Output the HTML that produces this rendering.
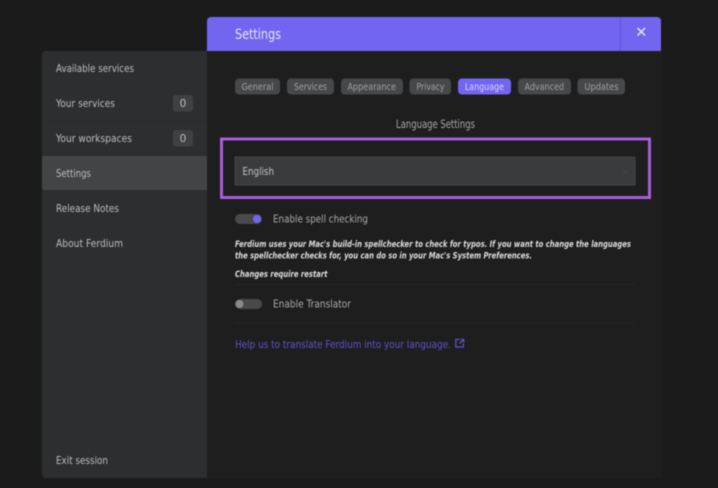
<!DOCTYPE html>
<html lang="en">
<head>
<meta charset="utf-8">
<title>Settings</title>
<style>
html,body{margin:0;padding:0;width:718px;height:488px;overflow:hidden;background:#1b1b1b}
svg{display:block;filter:blur(.45px)}
text{font-family:"DejaVu Sans",sans-serif;font-size:10.5px;fill:#bdbdbd}
.tab{font-size:9.5px;fill:#a0a0a0}
.note{font-size:8.5px;font-weight:bold;font-style:italic;fill:#dedede}
</style>
</head>
<body>
<svg xmlns="http://www.w3.org/2000/svg" width="718" height="488" viewBox="0 0 718 488">
  <rect width="718" height="488" fill="#1b1b1b"/>
  <!-- sidebar -->
  <path d="M46 51H207V478H46a4 4 0 0 1-4-4V55a4 4 0 0 1 4-4z" fill="#2d2e30"/>
  <g fill="#2a2b2d">
    <rect x="42" y="85" width="165" height="1"/><rect x="42" y="120" width="165" height="1"/>
    <rect x="42" y="155" width="165" height="1"/><rect x="42" y="225" width="165" height="1"/>
    <rect x="42" y="260" width="165" height="1"/>
  </g>
  <rect x="42" y="156" width="165" height="34" fill="#434446"/>
  <text x="56" y="72" textLength="78" lengthAdjust="spacingAndGlyphs">Available services</text>
  <text x="56" y="107" textLength="59" lengthAdjust="spacingAndGlyphs">Your services</text>
  <text x="56" y="142" textLength="76" lengthAdjust="spacingAndGlyphs">Your workspaces</text>
  <text x="56" y="177" textLength="35" lengthAdjust="spacingAndGlyphs">Settings</text>
  <text x="56" y="212" textLength="63" lengthAdjust="spacingAndGlyphs">Release Notes</text>
  <text x="56" y="247" textLength="67" lengthAdjust="spacingAndGlyphs">About Ferdium</text>
  <text x="56" y="464" textLength="52" lengthAdjust="spacingAndGlyphs">Exit session</text>
  <rect x="173" y="95" width="20" height="16.500" rx="3" fill="#404143"/>
  <rect x="173" y="130" width="20" height="16.500" rx="3" fill="#404143"/>
  <text x="183" y="107" text-anchor="middle">0</text>
  <text x="183" y="142" text-anchor="middle">0</text>

  <!-- panel -->
  <rect x="207" y="51" width="454" height="427" fill="#1e1e1e"/>
  <path d="M211 17H657a4 4 0 0 1 4 4V51H207V21a4 4 0 0 1 4-4z" fill="#7266f0"/>
  <rect x="619.500" y="17" width="1.500" height="34" fill="#6459e2"/>
  <text x="235" y="39" textLength="46" lengthAdjust="spacingAndGlyphs" style="font-size:14.500px;fill:#e6e3ff">Settings</text>
  <path d="M637.500 28L645 35.500M645 28L637.500 35.500" stroke="#f1efff" stroke-width="1.300" fill="none"/>

  <!-- tabs -->
  <g fill="#47484a">
    <rect x="235" y="78.500" width="45" height="16" rx="4"/>
    <rect x="287" y="78.500" width="47" height="16" rx="4"/>
    <rect x="341" y="78.500" width="62" height="16" rx="4"/>
    <rect x="409.500" y="78.500" width="41.500" height="16" rx="4"/>
    <rect x="458" y="78.500" width="53" height="16" rx="4" fill="#7266f0"/>
    <rect x="518" y="78.500" width="53" height="16" rx="4"/>
    <rect x="577.500" y="78.500" width="47.500" height="16" rx="4"/>
  </g>
  <text class="tab" x="241.500" y="90" textLength="32" lengthAdjust="spacingAndGlyphs">General</text>
  <text class="tab" x="294" y="90" textLength="33" lengthAdjust="spacingAndGlyphs">Services</text>
  <text class="tab" x="347.500" y="90" textLength="48.500" lengthAdjust="spacingAndGlyphs">Appearance</text>
  <text class="tab" x="416.500" y="90" textLength="28" lengthAdjust="spacingAndGlyphs">Privacy</text>
  <text class="tab" x="465" y="90" textLength="39" lengthAdjust="spacingAndGlyphs" style="fill:#d8d4ff">Language</text>
  <text class="tab" x="524.500" y="90" textLength="39.500" lengthAdjust="spacingAndGlyphs">Advanced</text>
  <text class="tab" x="584.500" y="90" textLength="34" lengthAdjust="spacingAndGlyphs">Updates</text>

  <text x="396" y="128" textLength="79" lengthAdjust="spacingAndGlyphs" style="font-size:11.500px;fill:#a8a8a8">Language Settings</text>

  <!-- select -->
  <rect x="235" y="157" width="400" height="28" fill="#3a3b3d" stroke="#444547" stroke-width="1"/>
  <text x="242.500" y="175" textLength="31.500" lengthAdjust="spacingAndGlyphs" style="fill:#c4c4c4">English</text>
  <path d="M623 170.500l2.500 2.500 2.500-2.500" stroke="#48494b" stroke-width="1" fill="none"/>

  <!-- highlight -->
  <rect x="221.500" y="139" width="428" height="58.500" fill="none" stroke="#ae5ce4" stroke-width="2.900"/>

  <!-- spell toggle -->
  <rect x="235" y="214" width="27" height="10" rx="5" fill="#4a4a4c"/>
  <circle cx="257" cy="219" r="4" fill="#7266f0"/>
  <text x="273" y="222.500" textLength="95" lengthAdjust="spacingAndGlyphs" style="fill:#ababab">Enable spell checking</text>

  <text class="note" x="235" y="247" textLength="396" lengthAdjust="spacingAndGlyphs">Ferdium uses your Mac's build-in spellchecker to check for typos. If you want to change the languages</text>
  <text class="note" x="235" y="258.500" textLength="297" lengthAdjust="spacingAndGlyphs">the spellchecker checks for, you can do so in your Mac's System Preferences.</text>
  <text class="note" x="235" y="277" textLength="92.500" lengthAdjust="spacingAndGlyphs">Changes require restart</text>

  <line x1="235" y1="284.500" x2="635" y2="284.500" stroke="#2e2e2e" stroke-width="1" stroke-dasharray="1 1"/>

  <!-- translator toggle -->
  <rect x="235" y="299" width="27" height="10" rx="5" fill="#4a4a4c"/>
  <circle cx="239.500" cy="304" r="4" fill="#8a8a8a"/>
  <text x="273" y="307.500" textLength="78" lengthAdjust="spacingAndGlyphs" style="fill:#ababab">Enable Translator</text>

  <line x1="235" y1="323" x2="635" y2="323" stroke="#2e2e2e" stroke-width="1" stroke-dasharray="1 1"/>

  <!-- link -->
  <text x="235" y="348" textLength="216" lengthAdjust="spacingAndGlyphs" style="fill:#5f53cc">Help us to translate Ferdium into your language.</text>
  <path d="M459.500 339.500H455.800V347H463.300V343.500M459.500 343.500L463.500 339.800M460.800 339.500H463.800V342.500" stroke="#5f53cc" stroke-width="1.200" fill="none"/>
</svg>
</body>
</html>
